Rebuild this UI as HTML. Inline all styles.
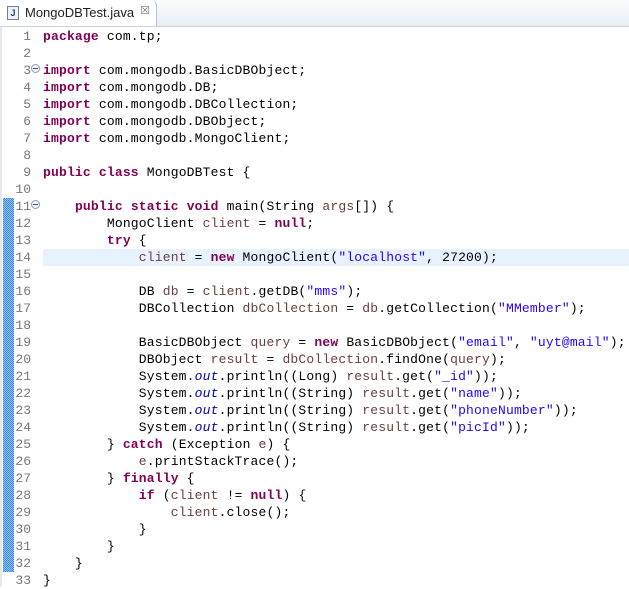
<!DOCTYPE html>
<html><head><meta charset="utf-8"><style>
body{margin:0;width:629px;height:587px;overflow:hidden;background:#fff;position:relative;font-family:"Liberation Mono",monospace;}
#tabbar{position:absolute;left:0;top:0;width:629px;height:26px;background:linear-gradient(#fbfcfd,#e9eef5);border-bottom:1px solid #c9d3df;}
#tab{position:absolute;left:0;top:0;width:156px;height:26px;background:#fff;border-right:1px solid #b9c4d2;border-radius:0 6px 0 0;font-family:"Liberation Sans",sans-serif;font-size:13px;color:#222;}
#tab .ic{position:absolute;left:7px;top:6px;width:10px;height:12px;border:1px solid #6a7f9a;background:#eef3fa;font-size:9px;font-weight:bold;color:#1f3f7a;text-align:center;line-height:12px;}
#tab .t{position:absolute;left:25px;top:5px;}
#tab .x{position:absolute;left:140px;top:4px;font-size:11px;color:#777;}
#gut{position:absolute;left:0;top:27px;width:40px;height:560px;background:#fff;border-left:2px solid #e8e8e8;}
#bar{position:absolute;left:3px;top:198px;width:11px;height:374px;background:#4f9ae6;background-image:repeating-conic-gradient(#3d8ae0 0 25%,#8ec0f0 0 50%);background-size:2px 2px;}
#hl{position:absolute;left:43px;top:249px;width:586px;height:17px;background:#e8f2fe;}
.ln{position:absolute;left:0;width:31px;text-align:right;font-size:13px;color:#787878;line-height:17px;}
.code{position:absolute;left:43px;top:28px;font-size:13px;line-height:17px;white-space:pre;color:#000;letter-spacing:0.18px;}
.k{color:#7f0055;font-weight:bold}.s{color:#2a00ff}.v{color:#6a3e3e}.f{color:#0000c0;font-style:italic}
.fold{position:absolute;left:31px;width:7px;height:7px;border:1px solid #8d9bb0;border-radius:50%;background:#f3f5f9;}
.fold:after{content:"";position:absolute;left:1px;top:3px;width:5px;height:1px;background:#555;}
</style></head><body>
<div id="tabbar"><div id="tab"><div class="ic">J</div><span class="t">MongoDBTest.java</span><span class="x">☒</span></div></div>
<div id="gut"></div>
<div id="bar"></div>
<div id="hl"></div>
<div class="fold" style="top:64px"></div>
<div class="fold" style="top:200px"></div>
<div class="ln" style="top:28px">1<br>2<br>3<br>4<br>5<br>6<br>7<br>8<br>9<br>10<br>11<br>12<br>13<br>14<br>15<br>16<br>17<br>18<br>19<br>20<br>21<br>22<br>23<br>24<br>25<br>26<br>27<br>28<br>29<br>30<br>31<br>32<br>33</div>
<div class="code"><span class="k">package</span> com.tp;

<span class="k">import</span> com.mongodb.BasicDBObject;
<span class="k">import</span> com.mongodb.DB;
<span class="k">import</span> com.mongodb.DBCollection;
<span class="k">import</span> com.mongodb.DBObject;
<span class="k">import</span> com.mongodb.MongoClient;

<span class="k">public</span> <span class="k">class</span> MongoDBTest {

    <span class="k">public</span> <span class="k">static</span> <span class="k">void</span> main(String <span class="v">args</span>[]) {
        MongoClient <span class="v">client</span> = <span class="k">null</span>;
        <span class="k">try</span> {
            <span class="v">client</span> = <span class="k">new</span> MongoClient(<span class="s">"localhost"</span>, 27200);

            DB <span class="v">db</span> = <span class="v">client</span>.getDB(<span class="s">"mms"</span>);
            DBCollection <span class="v">dbCollection</span> = <span class="v">db</span>.getCollection(<span class="s">"MMember"</span>);

            BasicDBObject <span class="v">query</span> = <span class="k">new</span> BasicDBObject(<span class="s">"email"</span>, <span class="s">"uyt@mail"</span>);
            DBObject <span class="v">result</span> = <span class="v">dbCollection</span>.findOne(<span class="v">query</span>);
            System.<span class="f">out</span>.println((Long) <span class="v">result</span>.get(<span class="s">"_id"</span>));
            System.<span class="f">out</span>.println((String) <span class="v">result</span>.get(<span class="s">"name"</span>));
            System.<span class="f">out</span>.println((String) <span class="v">result</span>.get(<span class="s">"phoneNumber"</span>));
            System.<span class="f">out</span>.println((String) <span class="v">result</span>.get(<span class="s">"picId"</span>));
        } <span class="k">catch</span> (Exception <span class="v">e</span>) {
            <span class="v">e</span>.printStackTrace();
        } <span class="k">finally</span> {
            <span class="k">if</span> (<span class="v">client</span> != <span class="k">null</span>) {
                <span class="v">client</span>.close();
            }
        }
    }
}</div>
</body></html>
